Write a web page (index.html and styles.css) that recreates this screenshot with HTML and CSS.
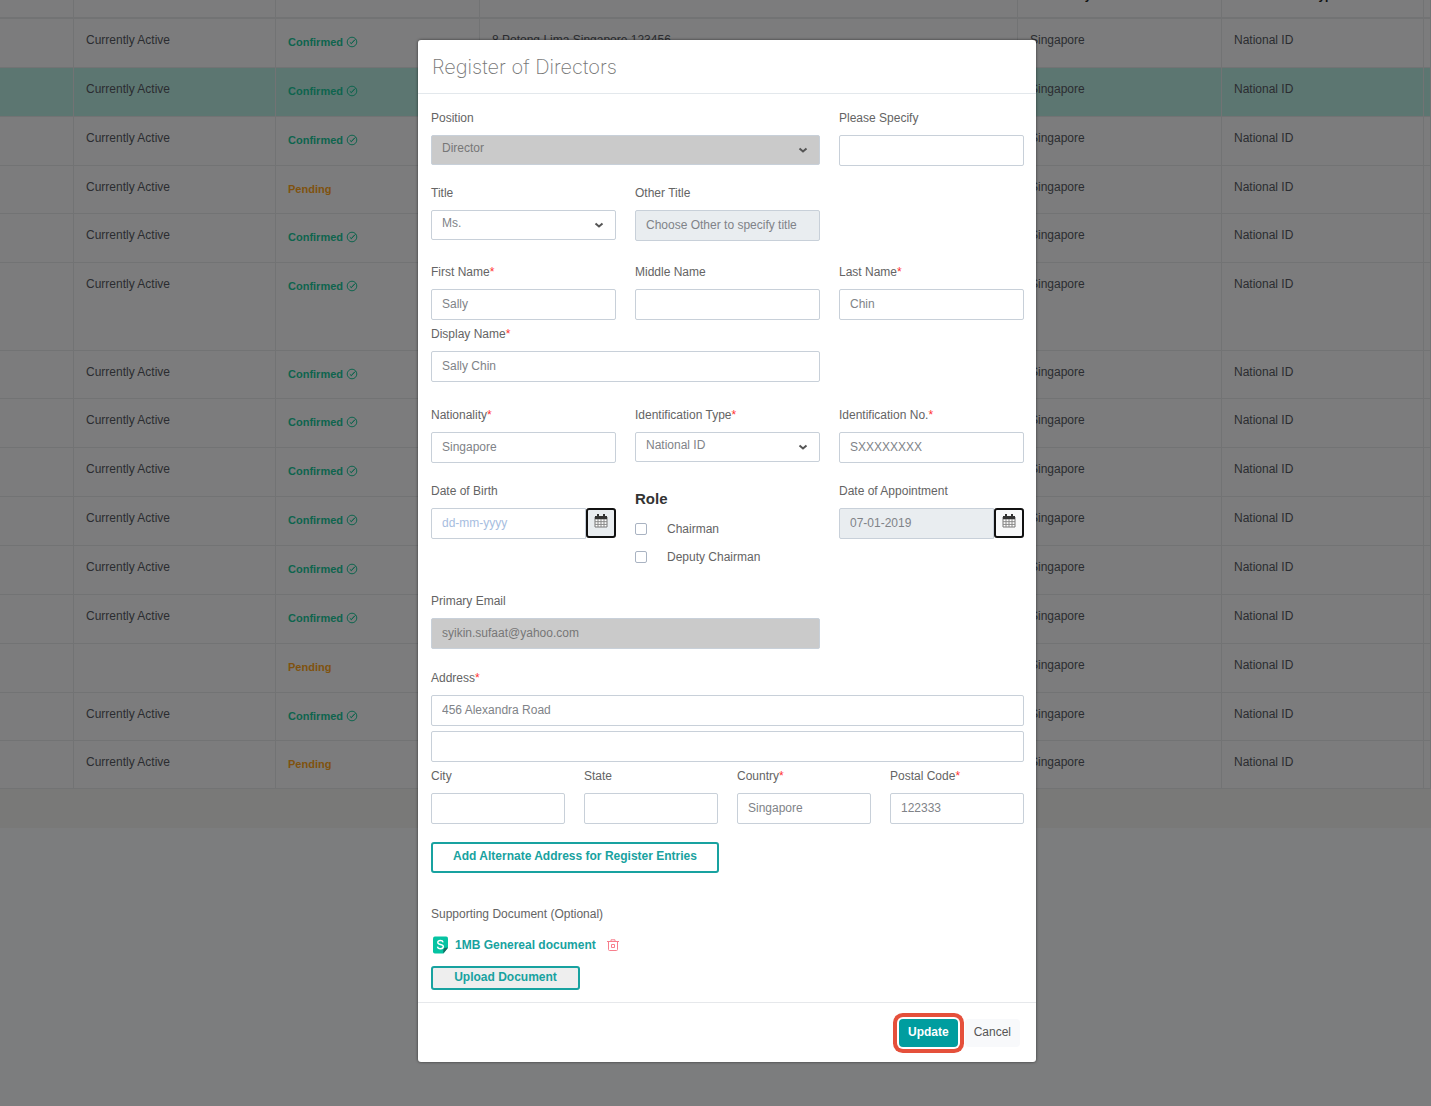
FILE: index.html
```html
<!DOCTYPE html>
<html lang="en">
<head>
<meta charset="utf-8">
<title>Register of Directors</title>
<link rel="stylesheet" href="styles.css">
</head>
<body>
<svg class="sprite" aria-hidden="true">
  <symbol id="check" viewBox="0 0 12 12"><circle cx="6" cy="6" r="4.8" fill="none" stroke="currentColor"/><path d="M3.8 6.2l1.6 1.5 3-3.6M5 7.8l4.6-4.6" fill="none" stroke="currentColor"/></symbol>
  <symbol id="calendar" viewBox="0 0 14 14"><path d="M1 3h12v10H1z" fill="#fff" stroke="#777"/><path d="M1 5h12M1 7.7h12M1 10.4h12M4 5v8M7 5v8M10 5v8" stroke="#888" fill="none"/><path d="M1 2h12v3H1z" fill="#333"/><path d="M4 0v3M10 0v3" stroke="#333" stroke-width="2"/></symbol>
</svg>
<main class="page">
  <table class="register">
    <colgroup><col class="col-lead"><col class="col-status"><col class="col-field"><col><col class="col-field"><col class="col-status"><col class="col-end"></colgroup>
    <thead><tr><th></th><th></th><th></th><th></th><th>Nationality</th><th>Identification Type</th><th></th></tr></thead>
    <tbody>
      <tr><td></td><td>Currently Active</td><td><span class="badge">Confirmed <svg><use href="#check"/></svg></span></td><td>8 Potong Lima Singapore 123456</td><td>Singapore</td><td>National ID</td><td></td></tr>
      <tr class="selected"><td></td><td>Currently Active</td><td><span class="badge">Confirmed <svg><use href="#check"/></svg></span></td><td></td><td>Singapore</td><td>National ID</td><td></td></tr>
      <tr><td></td><td>Currently Active</td><td><span class="badge">Confirmed <svg><use href="#check"/></svg></span></td><td></td><td>Singapore</td><td>National ID</td><td></td></tr>
      <tr class="compact"><td></td><td>Currently Active</td><td><span class="badge pending">Pending</span></td><td></td><td>Singapore</td><td>National ID</td><td></td></tr>
      <tr><td></td><td>Currently Active</td><td><span class="badge">Confirmed <svg><use href="#check"/></svg></span></td><td></td><td>Singapore</td><td>National ID</td><td></td></tr>
      <tr class="tall"><td></td><td>Currently Active</td><td><span class="badge">Confirmed <svg><use href="#check"/></svg></span></td><td></td><td>Singapore</td><td>National ID</td><td></td></tr>
      <tr class="compact"><td></td><td>Currently Active</td><td><span class="badge">Confirmed <svg><use href="#check"/></svg></span></td><td></td><td>Singapore</td><td>National ID</td><td></td></tr>
      <tr><td></td><td>Currently Active</td><td><span class="badge">Confirmed <svg><use href="#check"/></svg></span></td><td></td><td>Singapore</td><td>National ID</td><td></td></tr>
      <tr><td></td><td>Currently Active</td><td><span class="badge">Confirmed <svg><use href="#check"/></svg></span></td><td></td><td>Singapore</td><td>National ID</td><td></td></tr>
      <tr><td></td><td>Currently Active</td><td><span class="badge">Confirmed <svg><use href="#check"/></svg></span></td><td></td><td>Singapore</td><td>National ID</td><td></td></tr>
      <tr><td></td><td>Currently Active</td><td><span class="badge">Confirmed <svg><use href="#check"/></svg></span></td><td></td><td>Singapore</td><td>National ID</td><td></td></tr>
      <tr><td></td><td>Currently Active</td><td><span class="badge">Confirmed <svg><use href="#check"/></svg></span></td><td></td><td>Singapore</td><td>National ID</td><td></td></tr>
      <tr><td></td><td></td><td><span class="badge pending">Pending</span></td><td></td><td>Singapore</td><td>National ID</td><td></td></tr>
      <tr class="compact"><td></td><td>Currently Active</td><td><span class="badge">Confirmed <svg><use href="#check"/></svg></span></td><td></td><td>Singapore</td><td>National ID</td><td></td></tr>
      <tr class="compact"><td></td><td>Currently Active</td><td><span class="badge pending">Pending</span></td><td></td><td>Singapore</td><td>National ID</td><td></td></tr>
    </tbody>
  </table>
</main>
<div class="backdrop">
  <form class="modal" role="dialog" aria-labelledby="modal-title">
    <header class="modal-header"><h1 id="modal-title">Register of Directors</h1></header>
    <div class="modal-body">
      <div class="grid row-position">
        <div class="field wide"><label for="position">Position</label><div class="select dark"><select id="position" disabled><option>Director</option></select><svg viewBox="0 0 10 10"><path d="M1.500 3.500l3.500 3 3.500-3"/></svg></div></div>
        <div class="field"><label for="specify">Please Specify</label><input id="specify" type="text"></div>
      </div>
      <div class="grid row-title">
        <div class="field"><label for="title">Title</label><div class="select"><select id="title"><option>Ms.</option></select><svg viewBox="0 0 10 10"><path d="M1.500 3.500l3.500 3 3.500-3"/></svg></div></div>
        <div class="field"><label for="other">Other Title</label><input id="other" type="text" placeholder="Choose Other to specify title" disabled></div>
      </div>
      <div class="grid row-name">
        <div class="field"><label for="first">First Name<i>*</i></label><input id="first" type="text" value="Sally"></div>
        <div class="field"><label for="middle">Middle Name</label><input id="middle" type="text"></div>
        <div class="field"><label for="last">Last Name<i>*</i></label><input id="last" type="text" value="Chin"></div>
      </div>
      <div class="grid row-display">
        <div class="field wide"><label for="display">Display Name<i>*</i></label><input id="display" type="text" value="Sally Chin"></div>
      </div>
      <div class="grid row-identity">
        <div class="field"><label for="nationality">Nationality<i>*</i></label><input id="nationality" type="text" value="Singapore"></div>
        <div class="field"><label for="idtype">Identification Type<i>*</i></label><div class="select"><select id="idtype"><option>National ID</option></select><svg viewBox="0 0 10 10"><path d="M1.500 3.500l3.500 3 3.500-3"/></svg></div></div>
        <div class="field"><label for="idno">Identification No.<i>*</i></label><input id="idno" type="text" value="SXXXXXXXX"></div>
      </div>
      <div class="grid row-dates">
        <div class="field"><label for="birth">Date of Birth</label><div class="date"><input id="birth" type="text" placeholder="dd-mm-yyyy"><button type="button" aria-label="Choose date of birth"><svg><use href="#calendar"/></svg></button></div></div>
        <fieldset class="roles"><legend>Role</legend>
          <label><input type="checkbox">Chairman</label>
          <label><input type="checkbox">Deputy Chairman</label>
        </fieldset>
        <div class="field"><label for="appointed">Date of Appointment</label><div class="date"><input id="appointed" type="text" value="07-01-2019" disabled><button class="light" type="button" aria-label="Choose date of appointment"><svg><use href="#calendar"/></svg></button></div></div>
      </div>
      <div class="grid row-email">
        <div class="field wide"><label for="email">Primary Email</label><input id="email" class="dark" type="email" value="syikin.sufaat@yahoo.com" disabled></div>
      </div>
      <div class="field address"><label for="address">Address<i>*</i></label><input id="address" type="text" value="456 Alexandra Road"><input type="text" aria-label="Address line 2"></div>
      <div class="grid quarters">
        <div class="field"><label for="city">City</label><input id="city" type="text"></div>
        <div class="field"><label for="state">State</label><input id="state" type="text"></div>
        <div class="field"><label for="country">Country<i>*</i></label><input id="country" type="text" value="Singapore"></div>
        <div class="field"><label for="postal">Postal Code<i>*</i></label><input id="postal" type="text" value="122333"></div>
      </div>
      <button class="outline alternate" type="button">Add Alternate Address for Register Entries</button>
      <section class="documents">
        <h2>Supporting Document (Optional)</h2>
        <div class="document">
          <svg class="doc-icon" viewBox="0 0 16 18"><path d="M2 0h12a2 2 0 0 1 2 2v10l-5 6H2a2 2 0 0 1-2-2V2a2 2 0 0 1 2-2z" fill="#05c3a2"/><path d="M16 12l-5 6v-4a2 2 0 0 1 2-2z" fill="#176b60"/><path d="M10.800 6.200C10.500 4.800 9.400 4.200 7.900 4.200c-1.700 0-2.800.8-2.800 2.100 0 3 5.900 1.300 5.900 4.400 0 1.400-1.200 2.300-3 2.300s-3-.8-3.200-2.300" fill="none" stroke="#fff" stroke-width="1.500"/></svg>
          <a href="#document">1MB Genereal document</a>
          <button class="delete" type="button" aria-label="Delete document"><svg viewBox="0 0 12 12"><path d="M0 2.500h12M4 2V.8h4V2M1.500 3v7.500q0 1 1 1h7q1 0 1-1V3M4.500 5.500h3v3h-3z"/></svg></button>
        </div>
        <button class="outline upload" type="button">Upload Document</button>
      </section>
    </div>
    <footer class="modal-footer"><button class="update" type="submit">Update</button><button class="cancel" type="button">Cancel</button></footer>
  </form>
</div>
</body>
</html>
```
FILE: styles.css
```css
* { box-sizing: border-box; }
body { margin: 0; font: 12px/16px "Liberation Sans", Arial, sans-serif; color: #575962; background: #f9fafc; }
button, input, select { font: inherit; margin: 0; }
.sprite { display: none; }

/* The register is scrolled so that its heading row is mostly out of view. */
.page { padding-bottom: 39px; overflow: hidden; background: #f2f2f0; }
.register { width: 100%; margin-top: -26px; table-layout: fixed; border-collapse: separate; border-spacing: 0; background: #f8f9fb; }
.col-lead { width: 74px; }
.col-status { width: 202px; }
.col-field { width: 204px; }
.col-end { width: 7px; }
th, td { padding: 13px 12px 0; border: 0 solid #e4e7e9; border-width: 0 1px 1px 0; vertical-align: top; text-align: left; white-space: nowrap; }
th { height: 45px; border-bottom-width: 2px; color: #222; }
td { height: 49px; }
td:last-child, th:last-child { padding: 0; }
.compact td { height: 48px; }
.tall td { height: 88px; }
.selected td { background: #b9ede3; }
.badge { display: flex; align-items: center; gap: 3px; padding-top: 2px; font-size: 11px; font-weight: bold; color: #1cc99c; }
.badge svg { width: 12px; height: 12px; }
.pending { color: #ffa51c; }

.backdrop { position: absolute; top: 0; left: 0; width: 100%; min-height: 100%; padding: 40px 16px 40px 39px; background: rgba(0, 0, 0, .5); }
.modal { max-width: 618px; margin: 0 auto; background: #fff; border-radius: 3px; box-shadow: 0 0 3px rgba(0, 0, 0, .6); }
.modal-header { padding: 15px 14px 13px; border-bottom: 1px solid #e3e8ec; }
h1 { margin: 0; font: 200 20px/25px Inter, sans-serif; color: #777; }
.modal-body { padding: 16px 12px 12px 13px; color: #646464; }
.grid { display: grid; grid-template-columns: repeat(3, minmax(0, 1fr)); column-gap: 19px; }
.wide { grid-column: span 2; }
.field { min-width: 0; }
.field label { display: block; margin-bottom: 9px; }
i { color: #f33; font-style: normal; }
.field input, select { display: block; width: 100%; height: 31px; padding: 0 10px 2px; border: 1px solid #c8d0d9; border-radius: 2px; background: #fff; color: #808388; }
input::placeholder { color: #808388; opacity: 1; }
.field input:disabled { background: #e9edf0; }
.select { position: relative; }
.select select { height: 30px; appearance: none; padding-bottom: 4px; opacity: 1; }
.select svg { position: absolute; right: 12px; top: 10px; width: 10px; height: 10px; fill: none; stroke: #555; stroke-width: 2; }
.dark select, .field input.dark { background: #cacaca; color: #777; }
.row-position { margin-bottom: 19px; }
.row-title { margin-bottom: 23px; }
.row-name { margin-bottom: 6px; }
.row-display { margin-bottom: 25px; }
.row-identity { margin-bottom: 20px; }
.date { display: flex; }
.date input { flex: 1; min-width: 0; border-radius: 2px 0 0 2px; }
#birth::placeholder { color: #a7bde0; }
.date button { display: grid; place-items: center; width: 30px; height: 30px; padding: 0 0 4px; border: 2px solid #111; border-radius: 3px; background: #e9edf0; }
.date button.light { background: #f8f9fa; }
.date svg { width: 14px; height: 14px; }
.roles { display: flex; flex-direction: column; gap: 12px; border: 0; margin: 0; padding: 0; min-width: 0; }
.roles legend { padding: 8px 0 14px; font-size: 15px; font-weight: bold; color: #333; }
.roles label { display: flex; align-items: center; gap: 20px; }
.roles input { appearance: none; width: 12px; height: 12px; border: 1px solid #a9b3c2; border-radius: 2px; background: #fff; }
.row-email { margin: 28px 0 21px; }
.address { margin-bottom: 6px; }
.address input + input { margin-top: 5px; }
.quarters { grid-template-columns: repeat(4, minmax(0, 1fr)); margin-bottom: 18px; }
.outline { display: block; border: 2px solid #18a2a0; border-radius: 3px; background: #fff; color: #18a2a0; font-weight: bold; text-align: center; }
.alternate { width: 288px; height: 31px; padding: 0 0 3px; margin-bottom: 33px; }
h2 { margin: 0 0 14px; font: inherit; }
.document { display: flex; align-items: center; gap: 7px; margin: 0 2px 12px; }
.document a { color: #18a2a0; font-weight: bold; text-decoration: none; }
.doc-icon { width: 15px; height: 18px; }
.delete { padding: 0 4px; border: 0; background: none; height: 12px; }
.delete svg { display: block; width: 12px; height: 12px; fill: none; stroke: #f77f8d; }
.upload { width: 149px; height: 24px; padding: 0 0 2px; background: #eee; }
.modal-footer { display: flex; justify-content: flex-end; gap: 7px; padding: 16px 16px 15px; border-top: 1px solid #e6e8eb; }
.modal-footer button { height: 28px; padding: 0 9px 2px; border: 0; border-radius: 4px; }
.update { background: #009d9f; color: #fff; font-weight: bold; box-shadow: 0 0 0 2px #fff, 0 0 0 6px #e5503b; }
.cancel { background: #f8f9fb; color: #555; }
```
